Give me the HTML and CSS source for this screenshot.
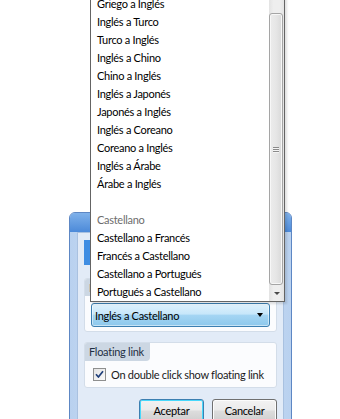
FILE: index.html
```html
<!DOCTYPE html>
<html>
<head>
<meta charset="utf-8">
<link rel="stylesheet" href="styles.css">
</head>
<body>
<div class="desk">
  <div class="dialog">
    <div class="titlebar"></div>
    <div class="frame">
      <div class="client">
        <div class="banner"></div>
        <div class="group g1">
          <div class="ghead">Idioma</div>
          <div class="gbody">
            <div class="combo"><span class="combo-text">Inglés a Castellano</span><span class="combo-arrow"></span></div>
          </div>
        </div>
        <div class="group g2">
          <div class="ghead">Floating link</div>
          <label class="check">
            <span class="box"><svg width="11" height="11" viewBox="0 0 11 11"><path d="M2 5.2 L4.4 8 L9 2.2" fill="none" stroke="#1f3f7a" stroke-width="1.7" stroke-linejoin="round"/></svg></span>
            <span>On double click show floating link</span>
          </label>
        </div>
        <div class="buttons">
          <button class="btn btn-default">Aceptar</button>
          <button class="btn">Cancelar</button>
        </div>
      </div>
    </div>
  </div>

  <div class="dropdown">
    <ul class="items">
      <li>Griego a Inglés</li>
      <li>Inglés a Turco</li>
      <li>Turco a Inglés</li>
      <li>Inglés a Chino</li>
      <li>Chino a Inglés</li>
      <li>Inglés a Japonés</li>
      <li>Japonés a Inglés</li>
      <li>Inglés a Coreano</li>
      <li>Coreano a Inglés</li>
      <li>Inglés a Árabe</li>
      <li>Árabe a Inglés</li>
      <li class="blank"></li>
      <li class="cat">Castellano</li>
      <li>Castellano a Francés</li>
      <li>Francés a Castellano</li>
      <li>Castellano a Portugués</li>
      <li>Portugués a Castellano</li>
    </ul>
    <div class="scrollbar">
      <div class="sb-up"></div>
      <div class="sb-track"></div>
      <div class="sb-thumb"><span class="grip"></span><span class="grip"></span><span class="grip"></span></div>
      <div class="sb-down"><span class="sb-arrow"></span></div>
    </div>
  </div>
</div>
</body>
</html>
```
FILE: styles.css
```css
* { box-sizing: border-box; }
html, body { margin: 0; padding: 0; }
body {
  width: 340px;
  height: 419px;
  overflow: hidden;
  background: #ffffff;
  font-family: "Lato", "Noto Sans", sans-serif;
  font-size: 11px;
  letter-spacing: -0.28px;
  color: #000;
}
.desk { position: relative; width: 340px; height: 419px; overflow: hidden; }

/* dialog window */
.dialog {
  position: absolute;
  left: 69px;
  top: 212px;
  width: 223px;
  height: 240px;
  display: flex;
  flex-direction: column;
  border: 1px solid #5d87c4;
  border-radius: 6px 6px 0 0;
  background: #c2d7f1;
  overflow: hidden;
}
.titlebar {
  height: 19px;
  background: linear-gradient(#7fb1ea, #4c8ad9);
  flex: none;
}
.frame {
  flex: 1;
  padding: 0 7px;
  display: flex;
  background: linear-gradient(90deg, #b9d1ef, #d6e5f7 40%, #d6e5f7 60%, #b9d1ef);
}
.client {
  flex: 1;
  background: #e2ebf7;
  border: 1px solid #a9c1e0;
  border-bottom: none;
  padding: 7px 6px 0 6px;
  display: flex;
  flex-direction: column;
}
.banner {
  height: 25px;
  background: #3f8de2;
  flex: none;
}
.group {
  background: #fbfcfe;
  border: 1px solid #d3dde9;
  border-radius: 3px;
  flex: none;
  overflow: hidden;
}
.g1 { margin-top: 13px; height: 54px; }
.g2 { margin-top: 10px; height: 46px; }
.ghead {
  display: inline-block;
  height: 17px;
  line-height: 17px;
  padding: 0 6px 0 4px;
  background: #ccd7e3;
  color: #1f2f44;
  border-radius: 0 0 4px 0;
}
.g2 .ghead { height: 18px; line-height: 18px; }
.gbody { padding: 7px 6px 0 6px; }
.combo {
  height: 24px;
  border: 1px solid #3c7fb1;
  border-radius: 3px;
  background: linear-gradient(#dff1fc 0%, #c7e7fa 45%, #a4d5f3 52%, #8dc8ec 100%);
  display: flex;
  align-items: center;
  justify-content: space-between;
  padding: 0 4px 0 3px;
  box-shadow: inset 0 0 0 1px rgba(255,255,255,0.5);
}
.combo-text { color: #000; }
.combo-arrow {
  width: 0; height: 0;
  border-left: 3.5px solid transparent;
  border-right: 3.5px solid transparent;
  border-top: 4px solid #000;
  margin-right: 2px;
}
.check {
  display: flex;
  align-items: center;
  gap: 5px;
  padding: 7px 0 0 8px;
  color: #1a1a1a;
}
.box {
  width: 13px; height: 13px;
  border: 1px solid #8e8f8f;
  background: linear-gradient(135deg, #e4e4e4, #fafafa);
  display: flex;
  align-items: center;
  justify-content: center;
  flex: none;
}
.buttons {
  display: flex;
  justify-content: flex-end;
  gap: 8px;
  margin-top: 11px;
}
.btn {
  width: 65px;
  height: 23px;
  font-family: inherit;
  font-size: 11px;
  letter-spacing: -0.28px;
  color: #000;
  border: 1px solid #707070;
  border-radius: 3px;
  background: linear-gradient(#f2f2f2 0%, #ebebeb 48%, #dddddd 52%, #cfcfcf 100%);
  box-shadow: inset 0 0 0 1px #fcfcfc;
  padding: 0;
}
.btn-default {
  border-color: #3c7fb1;
  box-shadow: inset 0 0 0 1px #48d8fb;
}

/* dropdown list overlay */
.dropdown {
  position: absolute;
  left: 90px;
  top: -6px;
  width: 195px;
  height: 308px;
  border: 1px solid #646464;
  background: #fff;
  display: flex;
  box-shadow: 2px 2px 2px rgba(0,0,0,0.12);
}
.items {
  list-style: none;
  margin: 0;
  padding: 0;
  flex: 1;
}
.items li {
  height: 18px;
  line-height: 18px;
  padding-left: 6px;
  white-space: nowrap;
}
.items li.cat { color: #6d6d6d; }
.scrollbar {
  width: 15px;
  flex: none;
  display: flex;
  flex-direction: column;
  background: linear-gradient(90deg, #e3e3e3, #eeeeee 30%, #eeeeee 70%, #e3e3e3);
}
.sb-up { height: 8px; }
.sb-track { height: 10px; }
.sb-thumb {
  height: 272px;
  margin: 0 1px 0 0;
  border: 1px solid #a5a5a5;
  border-radius: 3px;
  background: linear-gradient(90deg, #ececec, #e6e6e6 50%, #d9d9d9);
  box-shadow: inset 0 0 0 1px #f7f7f7;
  display: flex;
  flex-direction: column;
  align-items: center;
  justify-content: center;
  gap: 1px;
}
.grip { width: 6px; height: 1px; background: #8a8a8a; box-shadow: 0 1px 0 #f4f4f4; }
.sb-down {
  height: 16px;
  display: flex;
  align-items: center;
  justify-content: center;
}
.sb-arrow {
  width: 0; height: 0;
  border-left: 3px solid transparent;
  border-right: 3px solid transparent;
  border-top: 3px solid #4a4a4a;
}
```
